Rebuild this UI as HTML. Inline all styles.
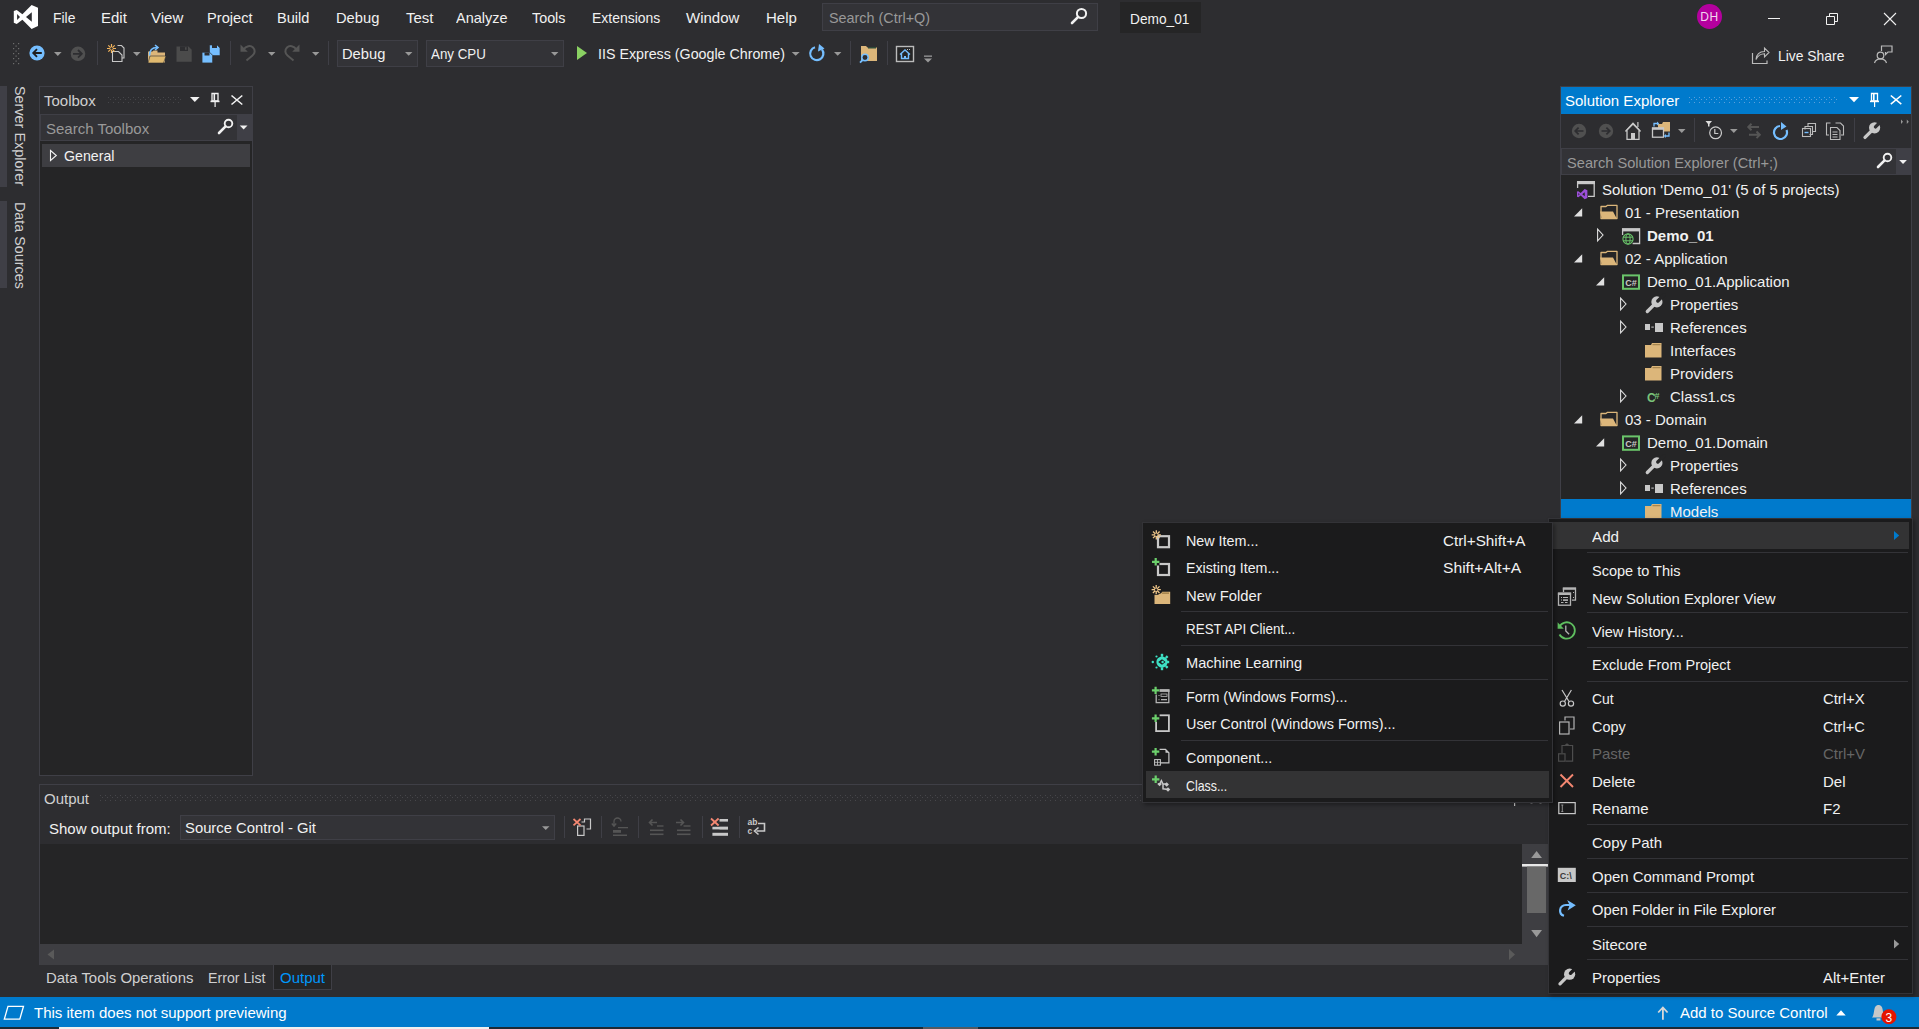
<!DOCTYPE html>
<html><head><meta charset="utf-8">
<style>
*{box-sizing:border-box}
html,body{margin:0;padding:0}
body{width:1919px;height:1029px;overflow:hidden;background:#2d2d30;position:relative;font-family:"Liberation Sans",sans-serif;color:#f1f1f1}
.a{position:absolute}
.t{position:absolute;font-size:15px;line-height:15px;white-space:pre;color:#f1f1f1}
.g{color:#999999}
.box{position:absolute;border:1px solid #3f3f46;background:#333337}
.sep{position:absolute;width:1px;background:#46464a}
svg{position:absolute;overflow:visible}
.msep{position:absolute;height:1px;background:#333337}
</style></head><body>

<!-- ============ MENU BAR ============ -->
<div id="menubar">
<svg style="left:13px;top:5px" width="26" height="25" viewBox="0 0 26 25"></svg>
<div class="t" style="left:53px;top:10px;transform:scaleX(0.927);transform-origin:0 0">File</div>
<div class="t" style="left:101px;top:10px">Edit</div>
<div class="t" style="left:151px;top:10px">View</div>
<div class="t" style="left:207px;top:10px;transform:scaleX(0.975);transform-origin:0 0">Project</div>
<div class="t" style="left:277px;top:10px;transform:scaleX(0.974);transform-origin:0 0">Build</div>
<div class="t" style="left:336px;top:10px;transform:scaleX(0.98);transform-origin:0 0">Debug</div>
<div class="t" style="left:406px;top:10px">Test</div>
<div class="t" style="left:456px;top:10px;transform:scaleX(0.965);transform-origin:0 0">Analyze</div>
<div class="t" style="left:532px;top:10px;transform:scaleX(0.956);transform-origin:0 0">Tools</div>
<div class="t" style="left:592px;top:10px;transform:scaleX(0.931);transform-origin:0 0">Extensions</div>
<div class="t" style="left:686px;top:10px">Window</div>
<div class="t" style="left:766px;top:10px">Help</div>
<div class="box" style="left:822px;top:3px;width:276px;height:28px"></div>
<div class="t g" style="left:829px;top:10px;transform:scaleX(0.958);transform-origin:0 0">Search (Ctrl+Q)</div>
<div class="a" style="left:1120px;top:2px;width:81px;height:31px;background:#252526"></div>
<div class="t" style="left:1130px;top:11px;transform:scaleX(0.914);transform-origin:0 0">Demo_01</div>
<div class="a" style="left:1697px;top:4px;width:25px;height:25px;border-radius:50%;background:#b4009e"></div>

<svg style="left:8px;top:0px" width="40" height="36" viewBox="0 0 40 36"><path fill="#fff" fill-rule="evenodd" d="M5.8,11 L8.7,9.9 L14.4,14.2 L23.6,4.9 L30,7.8 L30,25.9 L23.6,29 L14.4,19.8 L8.7,24 L5.8,22.8 Z M9.1,14 L12,16.9 L9.1,19.9 Z M18,16.9 L23.8,12.2 L23.8,21.8 Z"/></svg>
<svg style="left:1068px;top:6px" width="22" height="20" viewBox="0 0 22 20"><circle cx="13.5" cy="7.5" r="4.6" fill="none" stroke="#f1f1f1" stroke-width="2"/><path d="M10.2,10.8 L4,17" stroke="#f1f1f1" stroke-width="2.6" stroke-linecap="round"/></svg>
<div class="a" style="left:1697px;top:5px;width:25px;height:25px;font-size:12px;line-height:25px;text-align:center;color:#f3d6ef;letter-spacing:.5px">DH</div>
<div class="a" style="left:1768px;top:18px;width:12px;height:1px;background:#f1f1f1"></div>
<svg style="left:1824px;top:11px" width="16" height="16" viewBox="0 0 16 16"><path d="M2.5,5.5 h8 v8 h-8 z M5.5,5.5 v-3 h8 v8 h-3" fill="none" stroke="#f1f1f1" stroke-width="1"/></svg>
<svg style="left:1882px;top:11px" width="16" height="16" viewBox="0 0 16 16"><path d="M2,2 L14,14 M14,2 L2,14" stroke="#f1f1f1" stroke-width="1.1"/></svg>
</div>

<!-- ============ TOOLBAR ============ -->
<div id="toolbar">
<div class="box" style="left:337px;top:40px;width:81px;height:27px"></div>
<div class="t" style="left:342px;top:46px;transform:scaleX(0.98);transform-origin:0 0">Debug</div>
<div class="box" style="left:426px;top:40px;width:138px;height:27px"></div>
<div class="t" style="left:431px;top:46px;transform:scaleX(0.89);transform-origin:0 0">Any CPU</div>
<div class="t" style="left:598px;top:46px;transform:scaleX(0.95);transform-origin:0 0">IIS Express (Google Chrome)</div>
<div class="t" style="left:1778px;top:48px;transform:scaleX(0.926);transform-origin:0 0">Live Share</div>

<svg style="left:0;top:36px" width="1919" height="36" viewBox="0 36 1919 36">
 <g fill="#6d6d6d">
  <rect x="13" y="43" width="1.2" height="1.2"/><rect x="18" y="43" width="1.2" height="1.2"/>
  <rect x="13" y="48" width="1.2" height="1.2"/><rect x="18" y="48" width="1.2" height="1.2"/>
  <rect x="13" y="53" width="1.2" height="1.2"/><rect x="18" y="53" width="1.2" height="1.2"/>
  <rect x="13" y="58" width="1.2" height="1.2"/><rect x="18" y="58" width="1.2" height="1.2"/>
  <rect x="13" y="63" width="1.2" height="1.2"/><rect x="18" y="63" width="1.2" height="1.2"/>
  <rect x="15.5" y="45.5" width="1.2" height="1.2"/><rect x="15.5" y="50.5" width="1.2" height="1.2"/>
  <rect x="15.5" y="55.5" width="1.2" height="1.2"/><rect x="15.5" y="60.5" width="1.2" height="1.2"/>
 </g>
 <circle cx="37" cy="53" r="7.6" fill="#75beff"/>
 <path d="M41.8,53 H33.5 M37,49.2 L33.2,53 L37,56.8" fill="none" stroke="#1e1e1e" stroke-width="1.8"/>
 <circle cx="78" cy="53.8" r="7.3" fill="#505050"/>
 <path d="M73,53.8 H81.5 M78,50 L81.8,53.8 L78,57.6" fill="none" stroke="#2d2d30" stroke-width="1.8"/>
 <g fill="#999"><path d="M54,52 h7.6 l-3.8,4z"/><path d="M133,52 h7.6 l-3.8,4z"/><path d="M268,52 h7.4 l-3.7,3.8z"/><path d="M312,52 h7.4 l-3.7,3.8z"/><path d="M405,52 h7.4 l-3.7,3.8z"/><path d="M551,52 h7.4 l-3.7,3.8z"/><path d="M791.7,52 h8 l-4,3.8z"/><path d="M834,52 h7.4 l-3.7,3.8z"/></g>
 <g fill="#3f3f46"><rect x="97" y="41" width="1" height="24"/><rect x="230" y="41" width="1" height="24"/><rect x="328" y="41" width="1" height="24"/><rect x="850" y="41" width="1" height="24"/><rect x="887" y="41" width="1" height="24"/></g>
 <!-- new project -->
 <path d="M117.5,45.5 h4 l2.5,2.5 v10 h-2" fill="none" stroke="#c8c8c8" stroke-width="1.1"/>
 <path d="M112.5,51.5 h6 l3.5,3.5 v6.5 h-9.5 z" fill="#2d2d30" stroke="#c8c8c8" stroke-width="1.1"/>
 <g stroke="#f2b35b" stroke-width="1.2"><path d="M111.5,44 v9 M107,48.5 h9 M108.3,45.3 l6.4,6.4 M114.7,45.3 l-6.4,6.4"/></g>
 <circle cx="111.5" cy="48.5" r="1.2" fill="#2d2d30"/>
 <!-- open folder -->
 <path d="M148,51.5 h4.5 l1,-1 h4 v2 h7.5 v10 h-17 z" fill="#dcb67a"/>
 <path d="M150,56 h16 l-2.5,7 h-15.5 z" fill="#e0b96f" stroke="#2d2d30" stroke-width=".6"/>
 <path d="M149.5,55.5 C149.5,50 152,47.5 157,47.5" fill="none" stroke="#75beff" stroke-width="1.6"/>
 <path d="M155,45 l3,2.5 l-3,2.5" fill="none" stroke="#75beff" stroke-width="1.6"/>
 <!-- save gray -->
 <path d="M176.5,46.5 h12 l3.2,3.2 v12 h-15.2 z" fill="#4b4b4b"/>
 <path d="M180,46.5 h8 v4.5 h-8 z" fill="#2d2d30"/><rect x="185" y="47.2" width="1.6" height="2.6" fill="#4b4b4b"/>
 <!-- save all -->
 <path d="M209.5,45 h7.5 l3,3 v7.6 h-10.5 z" fill="#75beff" stroke="#2d2d30" stroke-width=".6"/>
 <path d="M212,45 h5 v3 h-5 z" fill="#2d2d30"/>
 <path d="M202,52.2 h7.5 l3.2,3.2 v7.6 h-10.7 z" fill="#75beff" stroke="#2d2d30" stroke-width=".8"/>
 <path d="M204.5,52.5 h5 v3 h-5 z" fill="#2d2d30"/>
 <!-- undo / redo -->
 <path d="M243.5,49.5 C246,46 250.5,45 253,47.5 C255.5,50 255,53.5 252.5,55.5 L246.5,60.5" fill="none" stroke="#555" stroke-width="2"/>
 <path d="M240.5,44.5 v7.3 h7.3 z" fill="#555"/>
 <path d="M296.5,49.5 C294,46 289.5,45 287,47.5 C284.5,50 285,53.5 287.5,55.5 L293.5,60.5" fill="none" stroke="#555" stroke-width="2"/>
 <path d="M299.5,44.5 v7.3 h-7.3 z" fill="#555"/>
 <!-- play -->
 <path d="M577,46 L587,53 L577,60 z" fill="#8ad163"/>
 <!-- refresh -->
 <path d="M822,49.5 A6.6,6.6 0 1 1 815,47.2" fill="none" stroke="#75beff" stroke-width="2.2"/>
 <path d="M819,44 L824.5,48.5 L818,51.5 z" fill="#75beff"/>
 <!-- folder search -->
 <path d="M861,46 h5 l1.5,1.5 h9.5 v13.5 h-16 z" fill="#dcb67a"/>
 <rect x="868" y="47" width="8" height="1.5" fill="#2d4a3a"/>
 <circle cx="865" cy="57.5" r="3.2" fill="#2d2d30" stroke="#75beff" stroke-width="1.5"/>
 <path d="M862.6,60 L860,62.6" stroke="#75beff" stroke-width="1.8"/>
 <!-- browser home -->
 <rect x="896.5" y="46.5" width="17" height="15" fill="#252526" stroke="#bbb" stroke-width="1.4"/>
 <path d="M900,54.5 L905,50 L910,54.5 M901.5,53.5 v5 h7 v-5" fill="none" stroke="#75beff" stroke-width="1.4"/>
 <rect x="904" y="56" width="2" height="2.5" fill="#75beff"/>
 <g fill="#bbb"><rect x="907" y="49" width="1" height="1"/><rect x="909" y="49" width="1" height="1"/></g>
 <!-- overflow -->
 <rect x="924" y="55.5" width="8" height="1.3" fill="#999"/><path d="M924,58.5 h8 l-4,4z" fill="#999"/>
 <!-- live share -->
 <path d="M1752.5,53 v10.5 h14.5 v-3" fill="none" stroke="#bbb" stroke-width="1.2"/>
 <path d="M1756,59.5 C1756.5,54 1760,51.5 1764.5,51.5 v-3.5 l4.5,4.5 l-4.5,4.5 v-3.2 C1761,53.8 1758,55.5 1756,59.5 z" fill="none" stroke="#bbb" stroke-width="1.1"/>
 <!-- feedback -->
 <circle cx="1880.5" cy="55.5" r="3.3" fill="none" stroke="#bbb" stroke-width="1.2"/>
 <path d="M1874.5,63 C1875.5,59.5 1877.5,58.8 1880.5,58.8 C1883.5,58.8 1885.5,59.5 1886.5,63" fill="none" stroke="#bbb" stroke-width="1.2"/>
 <path d="M1881.5,51 v-5 h10.5 v6 h-4 l-2.5,2.5 v-2.5" fill="none" stroke="#bbb" stroke-width="1.2"/>
</svg>
</div>

<!-- ============ LEFT STRIP ============ -->
<div class="a" style="left:0;top:86px;width:7px;height:101px;background:#3f3f46"></div>
<div class="a" style="left:0;top:201px;width:7px;height:87px;background:#3f3f46"></div>
<div class="t" style="left:27.5px;top:86px;color:#d0d0d0;transform:rotate(90deg) scaleX(0.96);transform-origin:0 0">Server Explorer</div>
<div class="t" style="left:27.5px;top:201.5px;color:#d0d0d0;transform:rotate(90deg) scaleX(0.955);transform-origin:0 0">Data Sources</div>

<!-- ============ TOOLBOX ============ -->
<div class="a" style="left:39px;top:86px;width:214px;height:690px;border:1px solid #3f3f46;background:#252526"></div>
<div class="a" style="left:40px;top:87px;width:212px;height:27px;background:#2d2d30"></div>
<div class="t" style="left:44px;top:93px;color:#d0d0d0">Toolbox</div>
<div class="a" style="left:40px;top:114px;width:212px;height:27px;background:#3f3f46"></div>
<div class="a" style="left:41px;top:115px;width:196px;height:25px;background:#333337"></div>
<div class="a" style="left:237px;top:115px;width:15px;height:25px;background:#3f3f46"></div>
<div class="t g" style="left:46px;top:121px">Search Toolbox</div>
<div class="a" style="left:42px;top:144px;width:208px;height:23px;background:#3e3e42"></div>
<div class="t" style="left:64px;top:148px;transform:scaleX(0.946);transform-origin:0 0">General</div>

<!-- ============ OUTPUT ============ -->
<div class="a" style="left:39px;top:784px;width:1512px;height:181px;border:1px solid #3f3f46;border-bottom:none;background:#2d2d30"></div>
<div class="t" style="left:44px;top:791px;color:#d0d0d0">Output</div>
<div class="t" style="left:49px;top:821px">Show output from:</div>
<div class="box" style="left:180px;top:815px;width:375px;height:25px"></div>
<div class="t" style="left:185px;top:820px;transform:scaleX(0.988);transform-origin:0 0">Source Control - Git</div>
<div class="a" style="left:40px;top:844px;width:1482px;height:100px;background:#252526"></div>
<div class="a" style="left:1522px;top:844px;width:27px;height:121px;background:#3e3e42"></div>
<div class="a" style="left:40px;top:944px;width:1482px;height:21px;background:#3e3e42"></div>
<div class="t" style="left:46px;top:970px;color:#d0d0d0;transform:scaleX(0.995);transform-origin:0 0">Data Tools Operations</div>
<div class="t" style="left:208px;top:970px;color:#d0d0d0;transform:scaleX(0.944);transform-origin:0 0">Error List</div>
<div class="a" style="left:273px;top:965px;width:59px;height:25px;border:1px solid #3f3f46;border-top:none;background:#252526"></div>
<div class="t" style="left:280px;top:970px;color:#0097fb">Output</div>
<svg style="left:0;top:0" width="1919" height="1029" viewBox="0 0 1919 1029">
 <g fill="#46464a"><rect x="100" y="795" width="1" height="1"/><rect x="100" y="800" width="1" height="1"/><rect x="102" y="797" width="1" height="1"/><rect x="105" y="795" width="1" height="1"/><rect x="105" y="800" width="1" height="1"/><rect x="107" y="797" width="1" height="1"/><rect x="110" y="795" width="1" height="1"/><rect x="110" y="800" width="1" height="1"/><rect x="112" y="797" width="1" height="1"/><rect x="115" y="795" width="1" height="1"/><rect x="115" y="800" width="1" height="1"/><rect x="117" y="797" width="1" height="1"/><rect x="120" y="795" width="1" height="1"/><rect x="120" y="800" width="1" height="1"/><rect x="122" y="797" width="1" height="1"/><rect x="125" y="795" width="1" height="1"/><rect x="125" y="800" width="1" height="1"/><rect x="127" y="797" width="1" height="1"/><rect x="130" y="795" width="1" height="1"/><rect x="130" y="800" width="1" height="1"/><rect x="132" y="797" width="1" height="1"/><rect x="135" y="795" width="1" height="1"/><rect x="135" y="800" width="1" height="1"/><rect x="137" y="797" width="1" height="1"/><rect x="140" y="795" width="1" height="1"/><rect x="140" y="800" width="1" height="1"/><rect x="142" y="797" width="1" height="1"/><rect x="145" y="795" width="1" height="1"/><rect x="145" y="800" width="1" height="1"/><rect x="147" y="797" width="1" height="1"/><rect x="150" y="795" width="1" height="1"/><rect x="150" y="800" width="1" height="1"/><rect x="152" y="797" width="1" height="1"/><rect x="155" y="795" width="1" height="1"/><rect x="155" y="800" width="1" height="1"/><rect x="157" y="797" width="1" height="1"/><rect x="160" y="795" width="1" height="1"/><rect x="160" y="800" width="1" height="1"/><rect x="162" y="797" width="1" height="1"/><rect x="165" y="795" width="1" height="1"/><rect x="165" y="800" width="1" height="1"/><rect x="167" y="797" width="1" height="1"/><rect x="170" y="795" width="1" height="1"/><rect x="170" y="800" width="1" height="1"/><rect x="172" y="797" width="1" height="1"/><rect x="175" y="795" width="1" height="1"/><rect x="175" y="800" width="1" height="1"/><rect x="177" y="797" width="1" height="1"/><rect x="180" y="795" width="1" height="1"/><rect x="180" y="800" width="1" height="1"/><rect x="182" y="797" width="1" height="1"/><rect x="185" y="795" width="1" height="1"/><rect x="185" y="800" width="1" height="1"/><rect x="187" y="797" width="1" height="1"/><rect x="190" y="795" width="1" height="1"/><rect x="190" y="800" width="1" height="1"/><rect x="192" y="797" width="1" height="1"/><rect x="195" y="795" width="1" height="1"/><rect x="195" y="800" width="1" height="1"/><rect x="197" y="797" width="1" height="1"/><rect x="200" y="795" width="1" height="1"/><rect x="200" y="800" width="1" height="1"/><rect x="202" y="797" width="1" height="1"/><rect x="205" y="795" width="1" height="1"/><rect x="205" y="800" width="1" height="1"/><rect x="207" y="797" width="1" height="1"/><rect x="210" y="795" width="1" height="1"/><rect x="210" y="800" width="1" height="1"/><rect x="212" y="797" width="1" height="1"/><rect x="215" y="795" width="1" height="1"/><rect x="215" y="800" width="1" height="1"/><rect x="217" y="797" width="1" height="1"/><rect x="220" y="795" width="1" height="1"/><rect x="220" y="800" width="1" height="1"/><rect x="222" y="797" width="1" height="1"/><rect x="225" y="795" width="1" height="1"/><rect x="225" y="800" width="1" height="1"/><rect x="227" y="797" width="1" height="1"/><rect x="230" y="795" width="1" height="1"/><rect x="230" y="800" width="1" height="1"/><rect x="232" y="797" width="1" height="1"/><rect x="235" y="795" width="1" height="1"/><rect x="235" y="800" width="1" height="1"/><rect x="237" y="797" width="1" height="1"/><rect x="240" y="795" width="1" height="1"/><rect x="240" y="800" width="1" height="1"/><rect x="242" y="797" width="1" height="1"/><rect x="245" y="795" width="1" height="1"/><rect x="245" y="800" width="1" height="1"/><rect x="247" y="797" width="1" height="1"/><rect x="250" y="795" width="1" height="1"/><rect x="250" y="800" width="1" height="1"/><rect x="252" y="797" width="1" height="1"/><rect x="255" y="795" width="1" height="1"/><rect x="255" y="800" width="1" height="1"/><rect x="257" y="797" width="1" height="1"/><rect x="260" y="795" width="1" height="1"/><rect x="260" y="800" width="1" height="1"/><rect x="262" y="797" width="1" height="1"/><rect x="265" y="795" width="1" height="1"/><rect x="265" y="800" width="1" height="1"/><rect x="267" y="797" width="1" height="1"/><rect x="270" y="795" width="1" height="1"/><rect x="270" y="800" width="1" height="1"/><rect x="272" y="797" width="1" height="1"/><rect x="275" y="795" width="1" height="1"/><rect x="275" y="800" width="1" height="1"/><rect x="277" y="797" width="1" height="1"/><rect x="280" y="795" width="1" height="1"/><rect x="280" y="800" width="1" height="1"/><rect x="282" y="797" width="1" height="1"/><rect x="285" y="795" width="1" height="1"/><rect x="285" y="800" width="1" height="1"/><rect x="287" y="797" width="1" height="1"/><rect x="290" y="795" width="1" height="1"/><rect x="290" y="800" width="1" height="1"/><rect x="292" y="797" width="1" height="1"/><rect x="295" y="795" width="1" height="1"/><rect x="295" y="800" width="1" height="1"/><rect x="297" y="797" width="1" height="1"/><rect x="300" y="795" width="1" height="1"/><rect x="300" y="800" width="1" height="1"/><rect x="302" y="797" width="1" height="1"/><rect x="305" y="795" width="1" height="1"/><rect x="305" y="800" width="1" height="1"/><rect x="307" y="797" width="1" height="1"/><rect x="310" y="795" width="1" height="1"/><rect x="310" y="800" width="1" height="1"/><rect x="312" y="797" width="1" height="1"/><rect x="315" y="795" width="1" height="1"/><rect x="315" y="800" width="1" height="1"/><rect x="317" y="797" width="1" height="1"/><rect x="320" y="795" width="1" height="1"/><rect x="320" y="800" width="1" height="1"/><rect x="322" y="797" width="1" height="1"/><rect x="325" y="795" width="1" height="1"/><rect x="325" y="800" width="1" height="1"/><rect x="327" y="797" width="1" height="1"/><rect x="330" y="795" width="1" height="1"/><rect x="330" y="800" width="1" height="1"/><rect x="332" y="797" width="1" height="1"/><rect x="335" y="795" width="1" height="1"/><rect x="335" y="800" width="1" height="1"/><rect x="337" y="797" width="1" height="1"/><rect x="340" y="795" width="1" height="1"/><rect x="340" y="800" width="1" height="1"/><rect x="342" y="797" width="1" height="1"/><rect x="345" y="795" width="1" height="1"/><rect x="345" y="800" width="1" height="1"/><rect x="347" y="797" width="1" height="1"/><rect x="350" y="795" width="1" height="1"/><rect x="350" y="800" width="1" height="1"/><rect x="352" y="797" width="1" height="1"/><rect x="355" y="795" width="1" height="1"/><rect x="355" y="800" width="1" height="1"/><rect x="357" y="797" width="1" height="1"/><rect x="360" y="795" width="1" height="1"/><rect x="360" y="800" width="1" height="1"/><rect x="362" y="797" width="1" height="1"/><rect x="365" y="795" width="1" height="1"/><rect x="365" y="800" width="1" height="1"/><rect x="367" y="797" width="1" height="1"/><rect x="370" y="795" width="1" height="1"/><rect x="370" y="800" width="1" height="1"/><rect x="372" y="797" width="1" height="1"/><rect x="375" y="795" width="1" height="1"/><rect x="375" y="800" width="1" height="1"/><rect x="377" y="797" width="1" height="1"/><rect x="380" y="795" width="1" height="1"/><rect x="380" y="800" width="1" height="1"/><rect x="382" y="797" width="1" height="1"/><rect x="385" y="795" width="1" height="1"/><rect x="385" y="800" width="1" height="1"/><rect x="387" y="797" width="1" height="1"/><rect x="390" y="795" width="1" height="1"/><rect x="390" y="800" width="1" height="1"/><rect x="392" y="797" width="1" height="1"/><rect x="395" y="795" width="1" height="1"/><rect x="395" y="800" width="1" height="1"/><rect x="397" y="797" width="1" height="1"/><rect x="400" y="795" width="1" height="1"/><rect x="400" y="800" width="1" height="1"/><rect x="402" y="797" width="1" height="1"/><rect x="405" y="795" width="1" height="1"/><rect x="405" y="800" width="1" height="1"/><rect x="407" y="797" width="1" height="1"/><rect x="410" y="795" width="1" height="1"/><rect x="410" y="800" width="1" height="1"/><rect x="412" y="797" width="1" height="1"/><rect x="415" y="795" width="1" height="1"/><rect x="415" y="800" width="1" height="1"/><rect x="417" y="797" width="1" height="1"/><rect x="420" y="795" width="1" height="1"/><rect x="420" y="800" width="1" height="1"/><rect x="422" y="797" width="1" height="1"/><rect x="425" y="795" width="1" height="1"/><rect x="425" y="800" width="1" height="1"/><rect x="427" y="797" width="1" height="1"/><rect x="430" y="795" width="1" height="1"/><rect x="430" y="800" width="1" height="1"/><rect x="432" y="797" width="1" height="1"/><rect x="435" y="795" width="1" height="1"/><rect x="435" y="800" width="1" height="1"/><rect x="437" y="797" width="1" height="1"/><rect x="440" y="795" width="1" height="1"/><rect x="440" y="800" width="1" height="1"/><rect x="442" y="797" width="1" height="1"/><rect x="445" y="795" width="1" height="1"/><rect x="445" y="800" width="1" height="1"/><rect x="447" y="797" width="1" height="1"/><rect x="450" y="795" width="1" height="1"/><rect x="450" y="800" width="1" height="1"/><rect x="452" y="797" width="1" height="1"/><rect x="455" y="795" width="1" height="1"/><rect x="455" y="800" width="1" height="1"/><rect x="457" y="797" width="1" height="1"/><rect x="460" y="795" width="1" height="1"/><rect x="460" y="800" width="1" height="1"/><rect x="462" y="797" width="1" height="1"/><rect x="465" y="795" width="1" height="1"/><rect x="465" y="800" width="1" height="1"/><rect x="467" y="797" width="1" height="1"/><rect x="470" y="795" width="1" height="1"/><rect x="470" y="800" width="1" height="1"/><rect x="472" y="797" width="1" height="1"/><rect x="475" y="795" width="1" height="1"/><rect x="475" y="800" width="1" height="1"/><rect x="477" y="797" width="1" height="1"/><rect x="480" y="795" width="1" height="1"/><rect x="480" y="800" width="1" height="1"/><rect x="482" y="797" width="1" height="1"/><rect x="485" y="795" width="1" height="1"/><rect x="485" y="800" width="1" height="1"/><rect x="487" y="797" width="1" height="1"/><rect x="490" y="795" width="1" height="1"/><rect x="490" y="800" width="1" height="1"/><rect x="492" y="797" width="1" height="1"/><rect x="495" y="795" width="1" height="1"/><rect x="495" y="800" width="1" height="1"/><rect x="497" y="797" width="1" height="1"/><rect x="500" y="795" width="1" height="1"/><rect x="500" y="800" width="1" height="1"/><rect x="502" y="797" width="1" height="1"/><rect x="505" y="795" width="1" height="1"/><rect x="505" y="800" width="1" height="1"/><rect x="507" y="797" width="1" height="1"/><rect x="510" y="795" width="1" height="1"/><rect x="510" y="800" width="1" height="1"/><rect x="512" y="797" width="1" height="1"/><rect x="515" y="795" width="1" height="1"/><rect x="515" y="800" width="1" height="1"/><rect x="517" y="797" width="1" height="1"/><rect x="520" y="795" width="1" height="1"/><rect x="520" y="800" width="1" height="1"/><rect x="522" y="797" width="1" height="1"/><rect x="525" y="795" width="1" height="1"/><rect x="525" y="800" width="1" height="1"/><rect x="527" y="797" width="1" height="1"/><rect x="530" y="795" width="1" height="1"/><rect x="530" y="800" width="1" height="1"/><rect x="532" y="797" width="1" height="1"/><rect x="535" y="795" width="1" height="1"/><rect x="535" y="800" width="1" height="1"/><rect x="537" y="797" width="1" height="1"/><rect x="540" y="795" width="1" height="1"/><rect x="540" y="800" width="1" height="1"/><rect x="542" y="797" width="1" height="1"/><rect x="545" y="795" width="1" height="1"/><rect x="545" y="800" width="1" height="1"/><rect x="547" y="797" width="1" height="1"/><rect x="550" y="795" width="1" height="1"/><rect x="550" y="800" width="1" height="1"/><rect x="552" y="797" width="1" height="1"/><rect x="555" y="795" width="1" height="1"/><rect x="555" y="800" width="1" height="1"/><rect x="557" y="797" width="1" height="1"/><rect x="560" y="795" width="1" height="1"/><rect x="560" y="800" width="1" height="1"/><rect x="562" y="797" width="1" height="1"/><rect x="565" y="795" width="1" height="1"/><rect x="565" y="800" width="1" height="1"/><rect x="567" y="797" width="1" height="1"/><rect x="570" y="795" width="1" height="1"/><rect x="570" y="800" width="1" height="1"/><rect x="572" y="797" width="1" height="1"/><rect x="575" y="795" width="1" height="1"/><rect x="575" y="800" width="1" height="1"/><rect x="577" y="797" width="1" height="1"/><rect x="580" y="795" width="1" height="1"/><rect x="580" y="800" width="1" height="1"/><rect x="582" y="797" width="1" height="1"/><rect x="585" y="795" width="1" height="1"/><rect x="585" y="800" width="1" height="1"/><rect x="587" y="797" width="1" height="1"/><rect x="590" y="795" width="1" height="1"/><rect x="590" y="800" width="1" height="1"/><rect x="592" y="797" width="1" height="1"/><rect x="595" y="795" width="1" height="1"/><rect x="595" y="800" width="1" height="1"/><rect x="597" y="797" width="1" height="1"/><rect x="600" y="795" width="1" height="1"/><rect x="600" y="800" width="1" height="1"/><rect x="602" y="797" width="1" height="1"/><rect x="605" y="795" width="1" height="1"/><rect x="605" y="800" width="1" height="1"/><rect x="607" y="797" width="1" height="1"/><rect x="610" y="795" width="1" height="1"/><rect x="610" y="800" width="1" height="1"/><rect x="612" y="797" width="1" height="1"/><rect x="615" y="795" width="1" height="1"/><rect x="615" y="800" width="1" height="1"/><rect x="617" y="797" width="1" height="1"/><rect x="620" y="795" width="1" height="1"/><rect x="620" y="800" width="1" height="1"/><rect x="622" y="797" width="1" height="1"/><rect x="625" y="795" width="1" height="1"/><rect x="625" y="800" width="1" height="1"/><rect x="627" y="797" width="1" height="1"/><rect x="630" y="795" width="1" height="1"/><rect x="630" y="800" width="1" height="1"/><rect x="632" y="797" width="1" height="1"/><rect x="635" y="795" width="1" height="1"/><rect x="635" y="800" width="1" height="1"/><rect x="637" y="797" width="1" height="1"/><rect x="640" y="795" width="1" height="1"/><rect x="640" y="800" width="1" height="1"/><rect x="642" y="797" width="1" height="1"/><rect x="645" y="795" width="1" height="1"/><rect x="645" y="800" width="1" height="1"/><rect x="647" y="797" width="1" height="1"/><rect x="650" y="795" width="1" height="1"/><rect x="650" y="800" width="1" height="1"/><rect x="652" y="797" width="1" height="1"/><rect x="655" y="795" width="1" height="1"/><rect x="655" y="800" width="1" height="1"/><rect x="657" y="797" width="1" height="1"/><rect x="660" y="795" width="1" height="1"/><rect x="660" y="800" width="1" height="1"/><rect x="662" y="797" width="1" height="1"/><rect x="665" y="795" width="1" height="1"/><rect x="665" y="800" width="1" height="1"/><rect x="667" y="797" width="1" height="1"/><rect x="670" y="795" width="1" height="1"/><rect x="670" y="800" width="1" height="1"/><rect x="672" y="797" width="1" height="1"/><rect x="675" y="795" width="1" height="1"/><rect x="675" y="800" width="1" height="1"/><rect x="677" y="797" width="1" height="1"/><rect x="680" y="795" width="1" height="1"/><rect x="680" y="800" width="1" height="1"/><rect x="682" y="797" width="1" height="1"/><rect x="685" y="795" width="1" height="1"/><rect x="685" y="800" width="1" height="1"/><rect x="687" y="797" width="1" height="1"/><rect x="690" y="795" width="1" height="1"/><rect x="690" y="800" width="1" height="1"/><rect x="692" y="797" width="1" height="1"/><rect x="695" y="795" width="1" height="1"/><rect x="695" y="800" width="1" height="1"/><rect x="697" y="797" width="1" height="1"/><rect x="700" y="795" width="1" height="1"/><rect x="700" y="800" width="1" height="1"/><rect x="702" y="797" width="1" height="1"/><rect x="705" y="795" width="1" height="1"/><rect x="705" y="800" width="1" height="1"/><rect x="707" y="797" width="1" height="1"/><rect x="710" y="795" width="1" height="1"/><rect x="710" y="800" width="1" height="1"/><rect x="712" y="797" width="1" height="1"/><rect x="715" y="795" width="1" height="1"/><rect x="715" y="800" width="1" height="1"/><rect x="717" y="797" width="1" height="1"/><rect x="720" y="795" width="1" height="1"/><rect x="720" y="800" width="1" height="1"/><rect x="722" y="797" width="1" height="1"/><rect x="725" y="795" width="1" height="1"/><rect x="725" y="800" width="1" height="1"/><rect x="727" y="797" width="1" height="1"/><rect x="730" y="795" width="1" height="1"/><rect x="730" y="800" width="1" height="1"/><rect x="732" y="797" width="1" height="1"/><rect x="735" y="795" width="1" height="1"/><rect x="735" y="800" width="1" height="1"/><rect x="737" y="797" width="1" height="1"/><rect x="740" y="795" width="1" height="1"/><rect x="740" y="800" width="1" height="1"/><rect x="742" y="797" width="1" height="1"/><rect x="745" y="795" width="1" height="1"/><rect x="745" y="800" width="1" height="1"/><rect x="747" y="797" width="1" height="1"/><rect x="750" y="795" width="1" height="1"/><rect x="750" y="800" width="1" height="1"/><rect x="752" y="797" width="1" height="1"/><rect x="755" y="795" width="1" height="1"/><rect x="755" y="800" width="1" height="1"/><rect x="757" y="797" width="1" height="1"/><rect x="760" y="795" width="1" height="1"/><rect x="760" y="800" width="1" height="1"/><rect x="762" y="797" width="1" height="1"/><rect x="765" y="795" width="1" height="1"/><rect x="765" y="800" width="1" height="1"/><rect x="767" y="797" width="1" height="1"/><rect x="770" y="795" width="1" height="1"/><rect x="770" y="800" width="1" height="1"/><rect x="772" y="797" width="1" height="1"/><rect x="775" y="795" width="1" height="1"/><rect x="775" y="800" width="1" height="1"/><rect x="777" y="797" width="1" height="1"/><rect x="780" y="795" width="1" height="1"/><rect x="780" y="800" width="1" height="1"/><rect x="782" y="797" width="1" height="1"/><rect x="785" y="795" width="1" height="1"/><rect x="785" y="800" width="1" height="1"/><rect x="787" y="797" width="1" height="1"/><rect x="790" y="795" width="1" height="1"/><rect x="790" y="800" width="1" height="1"/><rect x="792" y="797" width="1" height="1"/><rect x="795" y="795" width="1" height="1"/><rect x="795" y="800" width="1" height="1"/><rect x="797" y="797" width="1" height="1"/><rect x="800" y="795" width="1" height="1"/><rect x="800" y="800" width="1" height="1"/><rect x="802" y="797" width="1" height="1"/><rect x="805" y="795" width="1" height="1"/><rect x="805" y="800" width="1" height="1"/><rect x="807" y="797" width="1" height="1"/><rect x="810" y="795" width="1" height="1"/><rect x="810" y="800" width="1" height="1"/><rect x="812" y="797" width="1" height="1"/><rect x="815" y="795" width="1" height="1"/><rect x="815" y="800" width="1" height="1"/><rect x="817" y="797" width="1" height="1"/><rect x="820" y="795" width="1" height="1"/><rect x="820" y="800" width="1" height="1"/><rect x="822" y="797" width="1" height="1"/><rect x="825" y="795" width="1" height="1"/><rect x="825" y="800" width="1" height="1"/><rect x="827" y="797" width="1" height="1"/><rect x="830" y="795" width="1" height="1"/><rect x="830" y="800" width="1" height="1"/><rect x="832" y="797" width="1" height="1"/><rect x="835" y="795" width="1" height="1"/><rect x="835" y="800" width="1" height="1"/><rect x="837" y="797" width="1" height="1"/><rect x="840" y="795" width="1" height="1"/><rect x="840" y="800" width="1" height="1"/><rect x="842" y="797" width="1" height="1"/><rect x="845" y="795" width="1" height="1"/><rect x="845" y="800" width="1" height="1"/><rect x="847" y="797" width="1" height="1"/><rect x="850" y="795" width="1" height="1"/><rect x="850" y="800" width="1" height="1"/><rect x="852" y="797" width="1" height="1"/><rect x="855" y="795" width="1" height="1"/><rect x="855" y="800" width="1" height="1"/><rect x="857" y="797" width="1" height="1"/><rect x="860" y="795" width="1" height="1"/><rect x="860" y="800" width="1" height="1"/><rect x="862" y="797" width="1" height="1"/><rect x="865" y="795" width="1" height="1"/><rect x="865" y="800" width="1" height="1"/><rect x="867" y="797" width="1" height="1"/><rect x="870" y="795" width="1" height="1"/><rect x="870" y="800" width="1" height="1"/><rect x="872" y="797" width="1" height="1"/><rect x="875" y="795" width="1" height="1"/><rect x="875" y="800" width="1" height="1"/><rect x="877" y="797" width="1" height="1"/><rect x="880" y="795" width="1" height="1"/><rect x="880" y="800" width="1" height="1"/><rect x="882" y="797" width="1" height="1"/><rect x="885" y="795" width="1" height="1"/><rect x="885" y="800" width="1" height="1"/><rect x="887" y="797" width="1" height="1"/><rect x="890" y="795" width="1" height="1"/><rect x="890" y="800" width="1" height="1"/><rect x="892" y="797" width="1" height="1"/><rect x="895" y="795" width="1" height="1"/><rect x="895" y="800" width="1" height="1"/><rect x="897" y="797" width="1" height="1"/><rect x="900" y="795" width="1" height="1"/><rect x="900" y="800" width="1" height="1"/><rect x="902" y="797" width="1" height="1"/><rect x="905" y="795" width="1" height="1"/><rect x="905" y="800" width="1" height="1"/><rect x="907" y="797" width="1" height="1"/><rect x="910" y="795" width="1" height="1"/><rect x="910" y="800" width="1" height="1"/><rect x="912" y="797" width="1" height="1"/><rect x="915" y="795" width="1" height="1"/><rect x="915" y="800" width="1" height="1"/><rect x="917" y="797" width="1" height="1"/><rect x="920" y="795" width="1" height="1"/><rect x="920" y="800" width="1" height="1"/><rect x="922" y="797" width="1" height="1"/><rect x="925" y="795" width="1" height="1"/><rect x="925" y="800" width="1" height="1"/><rect x="927" y="797" width="1" height="1"/><rect x="930" y="795" width="1" height="1"/><rect x="930" y="800" width="1" height="1"/><rect x="932" y="797" width="1" height="1"/><rect x="935" y="795" width="1" height="1"/><rect x="935" y="800" width="1" height="1"/><rect x="937" y="797" width="1" height="1"/><rect x="940" y="795" width="1" height="1"/><rect x="940" y="800" width="1" height="1"/><rect x="942" y="797" width="1" height="1"/><rect x="945" y="795" width="1" height="1"/><rect x="945" y="800" width="1" height="1"/><rect x="947" y="797" width="1" height="1"/><rect x="950" y="795" width="1" height="1"/><rect x="950" y="800" width="1" height="1"/><rect x="952" y="797" width="1" height="1"/><rect x="955" y="795" width="1" height="1"/><rect x="955" y="800" width="1" height="1"/><rect x="957" y="797" width="1" height="1"/><rect x="960" y="795" width="1" height="1"/><rect x="960" y="800" width="1" height="1"/><rect x="962" y="797" width="1" height="1"/><rect x="965" y="795" width="1" height="1"/><rect x="965" y="800" width="1" height="1"/><rect x="967" y="797" width="1" height="1"/><rect x="970" y="795" width="1" height="1"/><rect x="970" y="800" width="1" height="1"/><rect x="972" y="797" width="1" height="1"/><rect x="975" y="795" width="1" height="1"/><rect x="975" y="800" width="1" height="1"/><rect x="977" y="797" width="1" height="1"/><rect x="980" y="795" width="1" height="1"/><rect x="980" y="800" width="1" height="1"/><rect x="982" y="797" width="1" height="1"/><rect x="985" y="795" width="1" height="1"/><rect x="985" y="800" width="1" height="1"/><rect x="987" y="797" width="1" height="1"/><rect x="990" y="795" width="1" height="1"/><rect x="990" y="800" width="1" height="1"/><rect x="992" y="797" width="1" height="1"/><rect x="995" y="795" width="1" height="1"/><rect x="995" y="800" width="1" height="1"/><rect x="997" y="797" width="1" height="1"/><rect x="1000" y="795" width="1" height="1"/><rect x="1000" y="800" width="1" height="1"/><rect x="1002" y="797" width="1" height="1"/><rect x="1005" y="795" width="1" height="1"/><rect x="1005" y="800" width="1" height="1"/><rect x="1007" y="797" width="1" height="1"/><rect x="1010" y="795" width="1" height="1"/><rect x="1010" y="800" width="1" height="1"/><rect x="1012" y="797" width="1" height="1"/><rect x="1015" y="795" width="1" height="1"/><rect x="1015" y="800" width="1" height="1"/><rect x="1017" y="797" width="1" height="1"/><rect x="1020" y="795" width="1" height="1"/><rect x="1020" y="800" width="1" height="1"/><rect x="1022" y="797" width="1" height="1"/><rect x="1025" y="795" width="1" height="1"/><rect x="1025" y="800" width="1" height="1"/><rect x="1027" y="797" width="1" height="1"/><rect x="1030" y="795" width="1" height="1"/><rect x="1030" y="800" width="1" height="1"/><rect x="1032" y="797" width="1" height="1"/><rect x="1035" y="795" width="1" height="1"/><rect x="1035" y="800" width="1" height="1"/><rect x="1037" y="797" width="1" height="1"/><rect x="1040" y="795" width="1" height="1"/><rect x="1040" y="800" width="1" height="1"/><rect x="1042" y="797" width="1" height="1"/><rect x="1045" y="795" width="1" height="1"/><rect x="1045" y="800" width="1" height="1"/><rect x="1047" y="797" width="1" height="1"/><rect x="1050" y="795" width="1" height="1"/><rect x="1050" y="800" width="1" height="1"/><rect x="1052" y="797" width="1" height="1"/><rect x="1055" y="795" width="1" height="1"/><rect x="1055" y="800" width="1" height="1"/><rect x="1057" y="797" width="1" height="1"/><rect x="1060" y="795" width="1" height="1"/><rect x="1060" y="800" width="1" height="1"/><rect x="1062" y="797" width="1" height="1"/><rect x="1065" y="795" width="1" height="1"/><rect x="1065" y="800" width="1" height="1"/><rect x="1067" y="797" width="1" height="1"/><rect x="1070" y="795" width="1" height="1"/><rect x="1070" y="800" width="1" height="1"/><rect x="1072" y="797" width="1" height="1"/><rect x="1075" y="795" width="1" height="1"/><rect x="1075" y="800" width="1" height="1"/><rect x="1077" y="797" width="1" height="1"/><rect x="1080" y="795" width="1" height="1"/><rect x="1080" y="800" width="1" height="1"/><rect x="1082" y="797" width="1" height="1"/><rect x="1085" y="795" width="1" height="1"/><rect x="1085" y="800" width="1" height="1"/><rect x="1087" y="797" width="1" height="1"/><rect x="1090" y="795" width="1" height="1"/><rect x="1090" y="800" width="1" height="1"/><rect x="1092" y="797" width="1" height="1"/><rect x="1095" y="795" width="1" height="1"/><rect x="1095" y="800" width="1" height="1"/><rect x="1097" y="797" width="1" height="1"/><rect x="1100" y="795" width="1" height="1"/><rect x="1100" y="800" width="1" height="1"/><rect x="1102" y="797" width="1" height="1"/><rect x="1105" y="795" width="1" height="1"/><rect x="1105" y="800" width="1" height="1"/><rect x="1107" y="797" width="1" height="1"/><rect x="1110" y="795" width="1" height="1"/><rect x="1110" y="800" width="1" height="1"/><rect x="1112" y="797" width="1" height="1"/><rect x="1115" y="795" width="1" height="1"/><rect x="1115" y="800" width="1" height="1"/><rect x="1117" y="797" width="1" height="1"/><rect x="1120" y="795" width="1" height="1"/><rect x="1120" y="800" width="1" height="1"/><rect x="1122" y="797" width="1" height="1"/><rect x="1125" y="795" width="1" height="1"/><rect x="1125" y="800" width="1" height="1"/><rect x="1127" y="797" width="1" height="1"/><rect x="1130" y="795" width="1" height="1"/><rect x="1130" y="800" width="1" height="1"/><rect x="1132" y="797" width="1" height="1"/><rect x="1135" y="795" width="1" height="1"/><rect x="1135" y="800" width="1" height="1"/><rect x="1137" y="797" width="1" height="1"/><rect x="1140" y="795" width="1" height="1"/><rect x="1140" y="800" width="1" height="1"/><rect x="1142" y="797" width="1" height="1"/></g>
 <!-- combo arrow -->
 <path d="M542,826.2 h7.5 l-3.75,3.8z" fill="#999"/>
 <g fill="#3f3f46"><rect x="564" y="816" width="1" height="22"/><rect x="601" y="816" width="1" height="22"/><rect x="638" y="816" width="1" height="22"/><rect x="702" y="816" width="1" height="22"/><rect x="739" y="816" width="1" height="22"/></g>
 <!-- find in code -->
 <g fill="none" stroke="#c8c8c8" stroke-width="1.2"><path d="M581.5,822 h3 v-3 h6 v10 h-4"/><rect x="577.6" y="826" width="6.4" height="9.4"/></g>
 <path d="M573.5,819 L580.5,825.3 M580.5,819 L573.5,825.3" stroke="#f48771" stroke-width="1.7"/>
 <!-- prev msg disabled -->
 <g fill="#555"><rect x="613" y="830" width="8" height="2.8"/><rect x="613" y="834.5" width="14" height="1.5"/><rect x="618" y="827" width="10" height="1.3"/></g>
 <path d="M614,826 v-4.5 a3.5,3.5 0 0 1 7,0 M611.8,823.5 l2.2,2.8 l2.2,-2.8" fill="none" stroke="#555" stroke-width="1.3"/>
 <!-- go prev / next -->
 <g fill="#555"><rect x="650" y="829.5" width="13.5" height="1.6"/><rect x="650" y="833.5" width="13.5" height="1.6"/><rect x="657" y="825.3" width="6.5" height="1.4"/>
  <rect x="677" y="829.5" width="13.5" height="1.6"/><rect x="677" y="833.5" width="13.5" height="1.6"/><rect x="683.5" y="825.3" width="7" height="1.4"/></g>
 <path d="M657,822.5 h-7.5 M652.5,819.5 l-3,3 l3,3 M676,822.5 h7.5 M680.5,819.5 l3,3 l-3,3" fill="none" stroke="#555" stroke-width="1.6"/>
 <!-- clear all -->
 <g fill="#c8c8c8"><rect x="719.5" y="819" width="8.5" height="2.6"/><rect x="719.5" y="826.8" width="8.5" height="2.6"/><rect x="712.4" y="826.8" width="15.6" height="2.6" /><rect x="712.4" y="832.8" width="15.6" height="3"/></g>
 <rect x="710" y="817.5" width="9" height="8.5" fill="#2d2d30"/>
 <path d="M711,818.5 L718.6,825.5 M718.6,818.5 L711,825.5" stroke="#f48771" stroke-width="1.8"/>
 <!-- word wrap -->
 <text x="747.5" y="825" font-size="8.5" font-family="Liberation Sans" font-weight="bold" fill="#c8c8c8">ab</text>
 <text x="747.5" y="833.5" font-size="8.5" font-family="Liberation Sans" font-weight="bold" fill="#c8c8c8">c</text>
 <path d="M758,823.5 h6.5 v7.5 h-8" fill="none" stroke="#c8c8c8" stroke-width="1.6"/>
 <path d="M758.5,827.5 l-4,3.5 l4,3.5" fill="none" stroke="#c8c8c8" stroke-width="1.6"/>
 <!-- scrollbar -->
 <path d="M1531.2,858 L1536.6,851 L1542,858 z" fill="#999"/>
 <rect x="1522" y="864" width="26" height="2.6" fill="#e8e8e8"/>
 <rect x="1527" y="866.6" width="19" height="46.4" fill="#686868"/>
 <path d="M1531.2,930 L1536.6,937.2 L1542,930 z" fill="#999"/>
 <path d="M54,949.5 L47.5,954.5 L54,959.5 z" fill="#5a5a5a"/>
 <path d="M1509,949 L1515,954.5 L1509,960 z" fill="#5a5a5a"/>
 <!-- title buttons peeking below submenu -->
 <rect x="1514" y="803" width="1.2" height="3" fill="#d0d0d0"/><rect x="1530.5" y="802.5" width="2" height="1" fill="#a8a8a8"/><rect x="1539.5" y="802.5" width="2" height="1" fill="#a8a8a8"/>
</svg>
<!-- ============ SOLUTION EXPLORER ============ -->
<div class="a" style="left:1560px;top:86px;width:352px;height:433px;border:1px solid #3f3f46;background:#252526"></div>
<div class="a" style="left:1561px;top:87px;width:350px;height:27px;background:#007acc"></div>
<div class="t" style="left:1565px;top:93px;color:#fff">Solution Explorer</div>
<div class="a" style="left:1561px;top:114px;width:350px;height:34px;background:#2d2d30"></div>
<div class="a" style="left:1561px;top:148px;width:350px;height:27px;background:#3f3f46"></div>
<div class="a" style="left:1562px;top:149px;width:334px;height:25px;background:#333337"></div>
<div class="t g" style="left:1567px;top:155px;transform:scaleX(0.975);transform-origin:0 0">Search Solution Explorer (Ctrl+;)</div>
<!-- TREE -->
<div class="a" style="left:1561px;top:174px;width:350px;height:344px;overflow:hidden">
<div class="a" style="left:0;top:325px;width:350px;height:23px;background:#007acc"></div>
<div class="t" style="left:41px;top:8px;">Solution 'Demo_01' (5 of 5 projects)</div>
<div class="t" style="left:64px;top:31px;">01 - Presentation</div>
<div class="t" style="left:86px;top:54px;font-weight:bold;">Demo_01</div>
<div class="t" style="left:64px;top:77px;">02 - Application</div>
<div class="t" style="left:86px;top:100px;">Demo_01.Application</div>
<div class="t" style="left:109px;top:123px;">Properties</div>
<div class="t" style="left:109px;top:146px;">References</div>
<div class="t" style="left:109px;top:169px;">Interfaces</div>
<div class="t" style="left:109px;top:192px;">Providers</div>
<div class="t" style="left:109px;top:215px;">Class1.cs</div>
<div class="t" style="left:64px;top:238px;">03 - Domain</div>
<div class="t" style="left:86px;top:261px;">Demo_01.Domain</div>
<div class="t" style="left:109px;top:284px;">Properties</div>
<div class="t" style="left:109px;top:307px;">References</div>
<div class="t" style="left:109px;top:330px;">Models</div>
<svg style="left:0;top:0" width="350" height="344" viewBox="1561 174 350 344">
<path d="M1577.6,193 v-11 h16.6 v14.3 h-10" fill="none" stroke="#c8c8c8" stroke-width="1.3"/><rect x="1577" y="181" width="18" height="3.2" fill="#c8c8c8"/><rect x="1576.5" y="188" width="11.5" height="11.5" fill="#252526"/><path transform="translate(1577,189) scale(0.43) translate(-5.8,-4.9)" fill="#9b4fd8" fill-rule="evenodd" d="M5.8,11 L8.7,9.9 L14.4,14.2 L23.6,4.9 L30,7.8 L30,25.9 L23.6,29 L14.4,19.8 L8.7,24 L5.8,22.8 Z M9.1,14 L12,16.9 L9.1,19.9 Z M18,16.9 L23.8,12.2 L23.8,21.8 Z"/>
<path d="M1582.2,208.3 v8.2 h-8.2 z" fill="#e0e0e0"/>
<path d="M1601,218.5 v-12 h5 l1.5,-1.2 h9.5 v13.2 z" fill="#252526" stroke="#dcb67a" stroke-width="1.3" stroke-linejoin="round"/><path d="M1600,211.5 h13 l4,7.5 h-15 z" fill="#dcb67a"/>
<path d="M1597.6,229.2 L1603,235 L1597.6,240.8 z" fill="none" stroke="#e0e0e0" stroke-width="1.1"/>
<path d="M1622.6,235 v-6 h17 v14.5 h-7" fill="none" stroke="#c8c8c8" stroke-width="1.3"/><rect x="1622" y="228.4" width="18" height="3" fill="#c8c8c8"/><circle cx="1628" cy="239" r="5.8" fill="#252526"/><circle cx="1628" cy="239" r="5.1" fill="none" stroke="#6ac46a" stroke-width="1.1"/><ellipse cx="1628" cy="239" rx="2.1" ry="5.1" fill="none" stroke="#6ac46a" stroke-width="1"/><path d="M1623.2,237.2 h9.6 M1623.2,240.8 h9.6" stroke="#6ac46a" stroke-width="1"/>
<path d="M1582.2,254.3 v8.2 h-8.2 z" fill="#e0e0e0"/>
<path d="M1601,264.5 v-12 h5 l1.5,-1.2 h9.5 v13.2 z" fill="#252526" stroke="#dcb67a" stroke-width="1.3" stroke-linejoin="round"/><path d="M1600,257.5 h13 l4,7.5 h-15 z" fill="#dcb67a"/>
<path d="M1604.2,277.3 v8.2 h-8.2 z" fill="#e0e0e0"/>
<rect x="1623" y="275.4" width="16" height="13.4" fill="#252526" stroke="#6ac46a" stroke-width="2"/><text x="1625.2" y="285.8" font-size="9" font-family="Liberation Sans" font-weight="bold" fill="#c8c8c8">C#</text>
<path d="M1620.6,298.2 L1626,304 L1620.6,309.8 z" fill="none" stroke="#e0e0e0" stroke-width="1.1"/>
<circle cx="1656.9" cy="301.9" r="5.6" fill="#c8c8c8"/><path d="M1656.9,301.9 L1647.3000000000002,311.5" stroke="#c8c8c8" stroke-width="3.3" stroke-linecap="round"/><path d="M1657.8000000000002,301.0 L1663.9,294.9" stroke="#252526" stroke-width="3.4" stroke-linecap="round"/>
<path d="M1620.6,321.2 L1626,327 L1620.6,332.8 z" fill="none" stroke="#e0e0e0" stroke-width="1.1"/>
<rect x="1645" y="324" width="5" height="6" fill="#c8c8c8"/><rect x="1651.3" y="326.6" width="2.5" height="1" fill="#c8c8c8"/><rect x="1655" y="323" width="8" height="9" fill="#c8c8c8"/>
<path d="M1645,345 h6 l1,-2 h9.5 v14.5 h-16.5 z" fill="#dcb67a"/><rect x="1652.5" y="344.2" width="8" height="1" fill="#9a7a45"/>
<path d="M1645,368 h6 l1,-2 h9.5 v14.5 h-16.5 z" fill="#dcb67a"/><rect x="1652.5" y="367.2" width="8" height="1" fill="#9a7a45"/>
<path d="M1620.6,390.2 L1626,396 L1620.6,401.8 z" fill="none" stroke="#e0e0e0" stroke-width="1.1"/>
<text x="1647" y="401.5" font-size="12" font-family="Liberation Sans" font-weight="bold" fill="#7ac47a">C</text><text x="1654.5" y="398.5" font-size="9" font-family="Liberation Sans" font-weight="bold" fill="#7ac47a">#</text>
<path d="M1582.2,415.3 v8.2 h-8.2 z" fill="#e0e0e0"/>
<path d="M1601,425.5 v-12 h5 l1.5,-1.2 h9.5 v13.2 z" fill="#252526" stroke="#dcb67a" stroke-width="1.3" stroke-linejoin="round"/><path d="M1600,418.5 h13 l4,7.5 h-15 z" fill="#dcb67a"/>
<path d="M1604.2,438.3 v8.2 h-8.2 z" fill="#e0e0e0"/>
<rect x="1623" y="436.4" width="16" height="13.4" fill="#252526" stroke="#6ac46a" stroke-width="2"/><text x="1625.2" y="446.8" font-size="9" font-family="Liberation Sans" font-weight="bold" fill="#c8c8c8">C#</text>
<path d="M1620.6,459.2 L1626,465 L1620.6,470.8 z" fill="none" stroke="#e0e0e0" stroke-width="1.1"/>
<circle cx="1656.9" cy="462.9" r="5.6" fill="#c8c8c8"/><path d="M1656.9,462.9 L1647.3000000000002,472.5" stroke="#c8c8c8" stroke-width="3.3" stroke-linecap="round"/><path d="M1657.8000000000002,462.0 L1663.9,455.9" stroke="#252526" stroke-width="3.4" stroke-linecap="round"/>
<path d="M1620.6,482.2 L1626,488 L1620.6,493.8 z" fill="none" stroke="#e0e0e0" stroke-width="1.1"/>
<rect x="1645" y="485" width="5" height="6" fill="#c8c8c8"/><rect x="1651.3" y="487.6" width="2.5" height="1" fill="#c8c8c8"/><rect x="1655" y="484" width="8" height="9" fill="#c8c8c8"/>
<path d="M1645,506 h6 l1,-2 h9.5 v14.5 h-16.5 z" fill="#dcb67a"/><rect x="1652.5" y="505.2" width="8" height="1" fill="#9a7a45"/>
</svg>
</div>
<svg style="left:0;top:0" width="1919" height="1029" viewBox="0 0 1919 1029"><g fill="#5aa0dc"><rect x="1689" y="97" width="1" height="1"/><rect x="1689" y="102" width="1" height="1"/><rect x="1691" y="99" width="1" height="1"/><rect x="1694" y="97" width="1" height="1"/><rect x="1694" y="102" width="1" height="1"/><rect x="1696" y="99" width="1" height="1"/><rect x="1699" y="97" width="1" height="1"/><rect x="1699" y="102" width="1" height="1"/><rect x="1701" y="99" width="1" height="1"/><rect x="1704" y="97" width="1" height="1"/><rect x="1704" y="102" width="1" height="1"/><rect x="1706" y="99" width="1" height="1"/><rect x="1709" y="97" width="1" height="1"/><rect x="1709" y="102" width="1" height="1"/><rect x="1711" y="99" width="1" height="1"/><rect x="1714" y="97" width="1" height="1"/><rect x="1714" y="102" width="1" height="1"/><rect x="1716" y="99" width="1" height="1"/><rect x="1719" y="97" width="1" height="1"/><rect x="1719" y="102" width="1" height="1"/><rect x="1721" y="99" width="1" height="1"/><rect x="1724" y="97" width="1" height="1"/><rect x="1724" y="102" width="1" height="1"/><rect x="1726" y="99" width="1" height="1"/><rect x="1729" y="97" width="1" height="1"/><rect x="1729" y="102" width="1" height="1"/><rect x="1731" y="99" width="1" height="1"/><rect x="1734" y="97" width="1" height="1"/><rect x="1734" y="102" width="1" height="1"/><rect x="1736" y="99" width="1" height="1"/><rect x="1739" y="97" width="1" height="1"/><rect x="1739" y="102" width="1" height="1"/><rect x="1741" y="99" width="1" height="1"/><rect x="1744" y="97" width="1" height="1"/><rect x="1744" y="102" width="1" height="1"/><rect x="1746" y="99" width="1" height="1"/><rect x="1749" y="97" width="1" height="1"/><rect x="1749" y="102" width="1" height="1"/><rect x="1751" y="99" width="1" height="1"/><rect x="1754" y="97" width="1" height="1"/><rect x="1754" y="102" width="1" height="1"/><rect x="1756" y="99" width="1" height="1"/><rect x="1759" y="97" width="1" height="1"/><rect x="1759" y="102" width="1" height="1"/><rect x="1761" y="99" width="1" height="1"/><rect x="1764" y="97" width="1" height="1"/><rect x="1764" y="102" width="1" height="1"/><rect x="1766" y="99" width="1" height="1"/><rect x="1769" y="97" width="1" height="1"/><rect x="1769" y="102" width="1" height="1"/><rect x="1771" y="99" width="1" height="1"/><rect x="1774" y="97" width="1" height="1"/><rect x="1774" y="102" width="1" height="1"/><rect x="1776" y="99" width="1" height="1"/><rect x="1779" y="97" width="1" height="1"/><rect x="1779" y="102" width="1" height="1"/><rect x="1781" y="99" width="1" height="1"/><rect x="1784" y="97" width="1" height="1"/><rect x="1784" y="102" width="1" height="1"/><rect x="1786" y="99" width="1" height="1"/><rect x="1789" y="97" width="1" height="1"/><rect x="1789" y="102" width="1" height="1"/><rect x="1791" y="99" width="1" height="1"/><rect x="1794" y="97" width="1" height="1"/><rect x="1794" y="102" width="1" height="1"/><rect x="1796" y="99" width="1" height="1"/><rect x="1799" y="97" width="1" height="1"/><rect x="1799" y="102" width="1" height="1"/><rect x="1801" y="99" width="1" height="1"/><rect x="1804" y="97" width="1" height="1"/><rect x="1804" y="102" width="1" height="1"/><rect x="1806" y="99" width="1" height="1"/><rect x="1809" y="97" width="1" height="1"/><rect x="1809" y="102" width="1" height="1"/><rect x="1811" y="99" width="1" height="1"/><rect x="1814" y="97" width="1" height="1"/><rect x="1814" y="102" width="1" height="1"/><rect x="1816" y="99" width="1" height="1"/><rect x="1819" y="97" width="1" height="1"/><rect x="1819" y="102" width="1" height="1"/><rect x="1821" y="99" width="1" height="1"/><rect x="1824" y="97" width="1" height="1"/><rect x="1824" y="102" width="1" height="1"/><rect x="1826" y="99" width="1" height="1"/><rect x="1829" y="97" width="1" height="1"/><rect x="1829" y="102" width="1" height="1"/><rect x="1831" y="99" width="1" height="1"/><rect x="1834" y="97" width="1" height="1"/><rect x="1834" y="102" width="1" height="1"/><rect x="1836" y="99" width="1" height="1"/></g><path d="M1849,97 h10 l-5,5.2z" fill="#fff"/><path d="M1871.5,93.5 h6 v7.5 h-6z" fill="none" stroke="#fff" stroke-width="1.3"/><rect x="1870" y="100.6" width="9" height="1.6" fill="#fff"/><rect x="1874" y="102" width="1.2" height="5" fill="#fff"/><rect x="1873" y="93.5" width="1.6" height="7" fill="#fff"/><path d="M1890.8,95.5 L1901.3,104.2 M1901.3,95.5 L1890.8,104.2" stroke="#fff" stroke-width="1.6"/><g fill="#46464a"><rect x="108" y="97" width="1" height="1"/><rect x="108" y="102" width="1" height="1"/><rect x="110" y="99" width="1" height="1"/><rect x="113" y="97" width="1" height="1"/><rect x="113" y="102" width="1" height="1"/><rect x="115" y="99" width="1" height="1"/><rect x="118" y="97" width="1" height="1"/><rect x="118" y="102" width="1" height="1"/><rect x="120" y="99" width="1" height="1"/><rect x="123" y="97" width="1" height="1"/><rect x="123" y="102" width="1" height="1"/><rect x="125" y="99" width="1" height="1"/><rect x="128" y="97" width="1" height="1"/><rect x="128" y="102" width="1" height="1"/><rect x="130" y="99" width="1" height="1"/><rect x="133" y="97" width="1" height="1"/><rect x="133" y="102" width="1" height="1"/><rect x="135" y="99" width="1" height="1"/><rect x="138" y="97" width="1" height="1"/><rect x="138" y="102" width="1" height="1"/><rect x="140" y="99" width="1" height="1"/><rect x="143" y="97" width="1" height="1"/><rect x="143" y="102" width="1" height="1"/><rect x="145" y="99" width="1" height="1"/><rect x="148" y="97" width="1" height="1"/><rect x="148" y="102" width="1" height="1"/><rect x="150" y="99" width="1" height="1"/><rect x="153" y="97" width="1" height="1"/><rect x="153" y="102" width="1" height="1"/><rect x="155" y="99" width="1" height="1"/><rect x="158" y="97" width="1" height="1"/><rect x="158" y="102" width="1" height="1"/><rect x="160" y="99" width="1" height="1"/><rect x="163" y="97" width="1" height="1"/><rect x="163" y="102" width="1" height="1"/><rect x="165" y="99" width="1" height="1"/><rect x="168" y="97" width="1" height="1"/><rect x="168" y="102" width="1" height="1"/><rect x="170" y="99" width="1" height="1"/><rect x="173" y="97" width="1" height="1"/><rect x="173" y="102" width="1" height="1"/><rect x="175" y="99" width="1" height="1"/><rect x="178" y="97" width="1" height="1"/><rect x="178" y="102" width="1" height="1"/><rect x="180" y="99" width="1" height="1"/></g><path d="M190,97 h9.6 l-4.8,5z" fill="#f1f1f1"/><path d="M212,93.5 h6 v7.5 h-6z" fill="none" stroke="#f1f1f1" stroke-width="1.3"/><rect x="210.5" y="100.6" width="9" height="1.6" fill="#f1f1f1"/><rect x="214.5" y="102" width="1.2" height="5" fill="#f1f1f1"/><rect x="213.5" y="93.5" width="1.6" height="7" fill="#f1f1f1"/><path d="M231.5,95.5 L242.3,104.5 M242.3,95.5 L231.5,104.5" stroke="#f1f1f1" stroke-width="1.6"/><circle cx="228.5" cy="123.5" r="3.8" fill="none" stroke="#f1f1f1" stroke-width="1.9"/><path d="M225.6,126.4 L219,133" stroke="#f1f1f1" stroke-width="2.6" stroke-linecap="round"/><path d="M239.8,125.5 h7.7 l-3.85,4z" fill="#f1f1f1"/><path d="M50.5,150.5 L56.3,155.5 L50.5,160.5 z" fill="none" stroke="#f1f1f1" stroke-width="1.1"/><circle cx="1579" cy="131" r="7.2" fill="#505050"/><path d="M1583.5,131 H1575.5 M1578.6,127.6 L1575.2,131 L1578.6,134.4" fill="none" stroke="#2d2d30" stroke-width="1.7"/><circle cx="1606" cy="131" r="7.2" fill="#505050"/><path d="M1601.5,131 H1609.5 M1606.4,127.6 L1609.8,131 L1606.4,134.4" fill="none" stroke="#2d2d30" stroke-width="1.7"/><path d="M1625.5,131.5 L1633,123.5 L1640.5,131.5" fill="none" stroke="#c8c8c8" stroke-width="1.6"/><path d="M1627,130 v9.3 h12 v-9.3 L1633,124 z" fill="#2d2d30" stroke="#c8c8c8" stroke-width="1.3"/><rect x="1631" y="133" width="4" height="6" fill="#c8c8c8"/><rect x="1637.3" y="122" width="1.2" height="5" fill="#c8c8c8"/><path d="M1658,124 h4 l1,-2 h7 v9.5 h-12z" fill="#dcb67a"/><rect x="1652.5" y="128" width="11" height="9.2" fill="#2d2d30" stroke="#c8c8c8" stroke-width="1.3"/><rect x="1652" y="127.5" width="12" height="2.3" fill="#c8c8c8"/><path d="M1654,126.5 v-3 h3.5" fill="none" stroke="#75beff" stroke-width="1.3"/><path d="M1657,121.5 l2.2,2 l-2.2,2z" fill="#75beff"/><path d="M1669,132.5 v3.5 h-3" fill="none" stroke="#75beff" stroke-width="1.3"/><path d="M1666,134 l-2.2,2 l2.2,2z" fill="#75beff"/><path d="M1678,129 h7.5 l-3.75,4z" fill="#999"/><rect x="1694" y="118" width="1" height="24" fill="#3f3f46"/><path d="M1705.5,121 h6.5 l-2.5,3 v2.5 h-1.5 v-2.5z" fill="#ddd"/><circle cx="1715.6" cy="132.8" r="5.9" fill="none" stroke="#ccc" stroke-width="1.2"/><path d="M1714.8,129 v4.5 h3.5" fill="none" stroke="#ccc" stroke-width="1.2"/><path d="M1730,129 h7.6 l-3.8,4z" fill="#999"/><path d="M1759,127 h-10 M1751.5,123.8 l-3.2,3.2 l3.2,3.2 M1749,134.8 h10.5 M1756.5,131.5 l3.3,3.3 l-3.3,3.3" fill="none" stroke="#555" stroke-width="2"/><path d="M1786.5,130 A6.5,6.5 0 1 1 1780,126" fill="none" stroke="#75beff" stroke-width="2.2"/><path d="M1781,122 L1786.5,126.5 L1781,130z" fill="#75beff"/><g fill="none" stroke="#bbb" stroke-width="1.1"><path d="M1808,126.5 v-3 h7.5 v8 h-3"/><path d="M1805,129.5 v-3 h7.5 v8 h-3"/><rect x="1802.5" y="128.5" width="8" height="8"/></g><rect x="1804.5" y="131.8" width="4" height="1.4" fill="#75beff"/><g fill="none" stroke="#bbb" stroke-width="1.1"><path d="M1829,135 h-2.5 v-12 h4"/><path d="M1841,135 h2.5 v-9 l-3,-3 h-5"/><path d="M1830.5,127.5 h6.5 l3,3 v9 h-9.5z" fill="#2d2d30"/><path d="M1832.5,132 h5 M1832.5,134.5 h5 M1832.5,137 h5"/></g><rect x="1854" y="118" width="1" height="24" fill="#3f3f46"/><circle cx="1874.6" cy="127.8" r="5.6" fill="#c8c8c8"/><path d="M1874.6,127.8 L1865.0,137.4" stroke="#c8c8c8" stroke-width="3.3" stroke-linecap="round"/><path d="M1875.5,126.89999999999999 L1881.6,120.8" stroke="#2d2d30" stroke-width="3.4" stroke-linecap="round"/><path d="M1901,119.6 l2,2.2 l-2,2.2z M1906.8,119.6 l2,2.2 l-2,2.2z" fill="#999"/><circle cx="1887.5" cy="157.5" r="3.8" fill="none" stroke="#f1f1f1" stroke-width="1.9"/><path d="M1884.6,160.4 L1878,167" stroke="#f1f1f1" stroke-width="2.6" stroke-linecap="round"/><path d="M1899.2,160 h7.7 l-3.85,4z" fill="#f1f1f1"/></svg>
<!-- ============ STATUS BAR ============ -->
<div class="a" style="left:0;top:997px;width:1919px;height:30px;background:#007acc"></div>
<div class="a" style="left:0;top:1027px;width:1919px;height:2px;background:#1c2a35"></div>
<div class="a" style="left:59px;top:1027px;width:430px;height:2px;background:#f0f0f0"></div>
<div class="a" style="left:923px;top:1027px;width:55px;height:2px;background:#555a60"></div>
<div class="t" style="left:34px;top:1005px;color:#fff">This item does not support previewing</div>
<div class="t" style="left:1680px;top:1005px;color:#fff">Add to Source Control</div>
<svg style="left:0;top:0" width="1919" height="1029" viewBox="0 0 1919 1029">
 <path d="M8,1006.3 H23.5 L19.8,1019.2 H4.3 z" fill="none" stroke="#fff" stroke-width="1.3"/>
 <path d="M1662.9,1019.7 V1008.5 M1658.2,1012.5 L1662.9,1007.5 L1667.6,1012.5" fill="none" stroke="#d8d8d8" stroke-width="1.8"/>
 <path d="M1836.3,1015.4 L1841,1010.3 L1845.7,1015.4 z" fill="#fff"/>
 <path d="M1872,1017.5 C1874.5,1015 1873.5,1009 1875.5,1006.5 C1877,1004.5 1880,1004.5 1881.5,1006.5 C1883.5,1009 1882.5,1015 1885,1017.5 z" fill="#c8c8c8"/>
 <rect x="1876.5" y="1018.3" width="4" height="2.2" fill="#c8c8c8"/>
 <circle cx="1888.9" cy="1016.8" r="7.5" fill="#e51400"/>
 <text x="1885.4" y="1021.8" font-size="12" font-family="Liberation Sans" fill="#fff">3</text>
</svg>
<!-- MAIN CONTEXT MENU -->
<div class="a" style="left:1548px;top:518px;width:365px;height:476px;background:#1b1b1c;border:1px solid #333337;box-shadow:2px 2px 4px rgba(0,0,0,.35)"></div>
<div class="a" style="left:1552px;top:522px;width:357px;height:27px;background:#333334"></div>
<div class="t" style="left:1592px;top:529px;color:#f1f1f1;transform:scaleX(1.015);transform-origin:0 0;">Add</div>
<div class="msep" style="left:1587px;top:552px;width:321px"></div>
<div class="t" style="left:1592px;top:563px;color:#f1f1f1;transform:scaleX(0.968);transform-origin:0 0;">Scope to This</div>
<div class="t" style="left:1592px;top:591px;color:#f1f1f1;transform:scaleX(0.993);transform-origin:0 0;">New Solution Explorer View</div>
<div class="msep" style="left:1587px;top:612px;width:321px"></div>
<div class="t" style="left:1592px;top:624px;color:#f1f1f1;transform:scaleX(0.971);transform-origin:0 0;">View History...</div>
<div class="msep" style="left:1587px;top:647px;width:321px"></div>
<div class="t" style="left:1592px;top:657px;color:#f1f1f1;transform:scaleX(0.967);transform-origin:0 0;">Exclude From Project</div>
<div class="msep" style="left:1587px;top:681px;width:321px"></div>
<div class="t" style="left:1592px;top:691px;color:#f1f1f1;transform:scaleX(0.93);transform-origin:0 0;">Cut</div>
<div class="t" style="left:1823px;top:691px;color:#f1f1f1;transform:scaleX(0.991);transform-origin:0 0;">Ctrl+X</div>
<div class="t" style="left:1592px;top:719px;color:#f1f1f1;transform:scaleX(0.959);transform-origin:0 0;">Copy</div>
<div class="t" style="left:1823px;top:719px;color:#f1f1f1;transform:scaleX(0.972);transform-origin:0 0;">Ctrl+C</div>
<div class="t" style="left:1592px;top:746px;color:#656565;">Paste</div>
<div class="t" style="left:1823px;top:746px;color:#656565;">Ctrl+V</div>
<div class="t" style="left:1592px;top:774px;color:#f1f1f1;">Delete</div>
<div class="t" style="left:1823px;top:774px;color:#f1f1f1;">Del</div>
<div class="t" style="left:1592px;top:801px;color:#f1f1f1;">Rename</div>
<div class="t" style="left:1823px;top:801px;color:#f1f1f1;">F2</div>
<div class="msep" style="left:1587px;top:824px;width:321px"></div>
<div class="t" style="left:1592px;top:835px;color:#f1f1f1;">Copy Path</div>
<div class="msep" style="left:1587px;top:858px;width:321px"></div>
<div class="t" style="left:1592px;top:869px;color:#f1f1f1;transform:scaleX(0.997);transform-origin:0 0;">Open Command Prompt</div>
<div class="msep" style="left:1587px;top:892px;width:321px"></div>
<div class="t" style="left:1592px;top:902px;color:#f1f1f1;transform:scaleX(0.981);transform-origin:0 0;">Open Folder in File Explorer</div>
<div class="msep" style="left:1587px;top:926px;width:321px"></div>
<div class="t" style="left:1592px;top:937px;color:#f1f1f1;">Sitecore</div>
<div class="msep" style="left:1587px;top:959px;width:321px"></div>
<div class="t" style="left:1592px;top:970px;color:#f1f1f1;">Properties</div>
<div class="t" style="left:1823px;top:970px;color:#f1f1f1;">Alt+Enter</div>
<svg style="left:0;top:0" width="1919" height="1029" viewBox="0 0 1919 1029">
 <!-- add arrow -->
 <path d="M1894,531 L1899.2,535.5 L1894,540 z" fill="#007acc"/>
 <!-- new solution explorer view -->
 <g fill="none" stroke="#b4b4b4" stroke-width="1.3">
  <path d="M1563.5,592 v-3.8 h12 v12 h-3.6"/>
  <rect x="1558.5" y="593.2" width="12" height="12"/>
 </g>
 <rect x="1562.8" y="587.6" width="13.2" height="2.2" fill="#b4b4b4"/>
 <rect x="1557.9" y="592.6" width="13.2" height="2.4" fill="#b4b4b4"/>
 <g fill="#b4b4b4"><rect x="1561" y="597" width="1" height="1"/><rect x="1563" y="597" width="5" height="1"/><rect x="1561" y="599.5" width="1" height="1"/><rect x="1563" y="599.3" width="5" height="1.6"/><rect x="1561" y="602" width="2.5" height="1"/><rect x="1565" y="602" width="2.5" height="1"/><rect x="1573" y="592" width="1" height="1"/><rect x="1573" y="597" width="1" height="1"/></g>
 <!-- view history -->
 <path d="M1559.2,627 A8.2,8.2 0 1 1 1559.5,634.5" fill="none" stroke="#5fbf5f" stroke-width="1.8"/>
 <path d="M1557.6,622.3 v6.4 h6.2 z" fill="#5fbf5f"/>
 <path d="M1565.8,625.5 v5.5 l3.3,3.3" fill="none" stroke="#b4b4b4" stroke-width="1.3"/>
 <!-- cut -->
 <g fill="none" stroke="#c8c8c8" stroke-width="1.2">
  <path d="M1562,690 L1569,701.5 M1571.4,690 L1564.5,701.5"/>
  <circle cx="1562.8" cy="703.6" r="2.6"/><circle cx="1571" cy="703.6" r="2.6"/>
 </g>
 <!-- copy -->
 <g fill="none" stroke="#b4b4b4" stroke-width="1.2">
  <path d="M1565,720.5 v-3.5 h9 v12 h-4"/>
  <rect x="1559.6" y="722" width="9.4" height="12"/>
 </g>
 <!-- paste disabled -->
 <g fill="none" stroke="#4d4d4d" stroke-width="1.2">
  <path d="M1562,753 v-7.5 h10.6 v15.6 h-7"/>
  <rect x="1558.6" y="753.8" width="6.4" height="7.4"/>
  <path d="M1565,745.5 l2,-1.6 l2,1.6"/>
 </g>
 <!-- delete -->
 <path d="M1560.5,774.5 L1573,787 M1573,774.5 L1560.5,787" stroke="#f48771" stroke-width="1.9"/>
 <!-- rename -->
 <rect x="1558.8" y="802.6" width="16.4" height="11" fill="none" stroke="#c8c8c8" stroke-width="1.2"/>
 <path d="M1561.3,805 h2 M1562.3,805 v6.5 M1561.3,811.5 h2" fill="none" stroke="#9a9a9a" stroke-width=".9"/>
 <!-- cmd -->
 <rect x="1557.8" y="867.8" width="18" height="14.2" fill="#c8c8c8"/>
 <text x="1559.8" y="878.6" font-size="9" font-family="Liberation Sans" font-weight="bold" fill="#3a3a3a">C:\</text>
 <!-- open folder in explorer -->
 <path d="M1564,915.8 C1558.5,914.2 1558.5,905.5 1566,905 H1572" fill="none" stroke="#75beff" stroke-width="2.2"/>
 <path d="M1567.2,900 L1575.8,905.2 L1567.6,910.5 L1569.6,905.2 z" fill="#75beff"/>
 <!-- sitecore arrow -->
 <path d="M1894,939.5 L1899.2,944 L1894,948.5 z" fill="#999"/>
 <!-- properties wrench -->
 <circle cx="1569.6" cy="974.2" r="5.6" fill="#c8c8c8"/><path d="M1569.6,974.2 L1560.0,983.8000000000001" stroke="#c8c8c8" stroke-width="3.3" stroke-linecap="round"/><path d="M1570.5,973.3000000000001 L1576.6,967.2" stroke="#1b1b1c" stroke-width="3.4" stroke-linecap="round"/>
</svg>

<!-- SUBMENU -->
<div class="a" style="left:1142px;top:522px;width:411px;height:281px;background:#1b1b1c;border:1px solid #333337;box-shadow:2px 2px 4px rgba(0,0,0,.35)"></div>
<div class="a" style="left:1146px;top:771px;width:403px;height:27px;background:#333334"></div>
<div class="t" style="left:1185.5px;top:533px;transform:scaleX(0.954);transform-origin:0 0;">New Item...</div>
<div class="t" style="left:1443px;top:533px;transform:scaleX(1.018);transform-origin:0 0;">Ctrl+Shift+A</div>
<div class="t" style="left:1185.5px;top:560px;transform:scaleX(0.948);transform-origin:0 0;">Existing Item...</div>
<div class="t" style="left:1443px;top:560px;transform:scaleX(1.043);transform-origin:0 0;">Shift+Alt+A</div>
<div class="t" style="left:1185.5px;top:588px;transform:scaleX(0.986);transform-origin:0 0;">New Folder</div>
<div class="msep" style="left:1181px;top:611px;width:367px"></div>
<div class="t" style="left:1185.5px;top:621px;transform:scaleX(0.894);transform-origin:0 0;">REST API Client...</div>
<div class="msep" style="left:1181px;top:645px;width:367px"></div>
<div class="t" style="left:1185.5px;top:655px;transform:scaleX(0.973);transform-origin:0 0;">Machine Learning</div>
<div class="msep" style="left:1181px;top:679px;width:367px"></div>
<div class="t" style="left:1185.5px;top:689px;transform:scaleX(0.954);transform-origin:0 0;">Form (Windows Forms)...</div>
<div class="t" style="left:1185.5px;top:716px;transform:scaleX(0.959);transform-origin:0 0;">User Control (Windows Forms)...</div>
<div class="msep" style="left:1181px;top:740px;width:367px"></div>
<div class="t" style="left:1185.5px;top:750px;transform:scaleX(0.958);transform-origin:0 0;">Component...</div>
<div class="t" style="left:1185.5px;top:778px;transform:scaleX(0.824);transform-origin:0 0;">Class...</div>
<svg style="left:0;top:0" width="1919" height="1029" viewBox="0 0 1919 1029">
 <defs>
  <g id="star"><path d="M0,-4.6 V4.6 M-4.6,0 H4.6 M-3.3,-3.3 L3.3,3.3 M3.3,-3.3 L-3.3,3.3" stroke="#f2c88a" stroke-width="1.3"/><circle r="1.3" fill="#1b1b1c"/></g>
  <g id="plus"><path d="M-3.7,0 H3.7 M0,-3.7 V3.7" stroke="#6cd06c" stroke-width="2.2"/></g>
 </defs>
 <!-- new item -->
 <rect x="1158" y="536.2" width="11" height="11" fill="none" stroke="#c8c8c8" stroke-width="2.2"/>
 <rect x="1155" y="528" width="7" height="7" fill="#1b1b1c"/>
 <use href="#star" x="1156.3" y="534.8"/>
 <!-- existing item -->
 <rect x="1158" y="564" width="11" height="11" fill="none" stroke="#c8c8c8" stroke-width="2.2"/>
 <rect x="1151" y="557" width="8.5" height="8.5" fill="#1b1b1c"/>
 <use href="#plus" x="1155.7" y="561.8"/>
 <!-- new folder -->
 <path d="M1154.5,593.5 h6.5 l1.2,-1.8 h8 v12.3 h-15.7 z" fill="#dcb67a"/>
 <rect x="1162" y="592.6" width="7" height="1" fill="#8a6a35"/>
 <circle cx="1156.2" cy="589.7" r="5.2" fill="#1b1b1c"/>
 <use href="#star" x="1156.2" y="589.7"/>
 <!-- machine learning gear -->
 <g fill="#3ee0c4">
  <circle cx="1162" cy="662" r="5.6"/>
  <rect x="1160.8" y="653.8" width="2.4" height="3"/><rect x="1160.8" y="667.2" width="2.4" height="3"/>
  <rect x="1166.2" y="660.8" width="3" height="2.4"/>
  <rect x="1165.5" y="655.8" width="2.4" height="2.6" transform="rotate(45 1166.7 657.1)"/>
  <rect x="1165.5" y="665.6" width="2.4" height="2.6" transform="rotate(-45 1166.7 666.9)"/>
  <circle cx="1152.8" cy="662" r="1.2"/><circle cx="1156.5" cy="656.5" r="1.1"/><circle cx="1156.5" cy="667.5" r="1.1"/>
 </g>
 <path d="M1158.2,662 L1162,659.2 L1165.6,662 L1162,664.8 z" fill="#1b1b1c"/>
 <circle cx="1162.6" cy="662" r="1.2" fill="#3ee0c4"/>
 <!-- form -->
 <rect x="1156.2" y="690" width="12.6" height="12.6" fill="#1b1b1c" stroke="#b4b4b4" stroke-width="1.3"/>
 <rect x="1156" y="689.3" width="13.5" height="2.6" fill="#b4b4b4"/>
 <g fill="#b4b4b4"><rect x="1158.5" y="695" width="1" height="1"/><rect x="1161" y="694" width="6" height="2.6" fill="none" stroke="#b4b4b4" stroke-width=".8"/><rect x="1158.5" y="699.2" width="1" height="1"/><rect x="1161" y="699" width="6" height="1.3"/></g>
 <rect x="1151" y="686" width="8.5" height="8.5" fill="#1b1b1c"/>
 <use href="#plus" x="1155.6" y="690.4"/>
 <!-- user control -->
 <rect x="1156.1" y="715.3" width="12.8" height="15.8" fill="none" stroke="#c8c8c8" stroke-width="1.8"/>
 <rect x="1151" y="713.5" width="8.6" height="8.5" fill="#1b1b1c"/>
 <use href="#plus" x="1155.6" y="718.3"/>
 <!-- component -->
 <path d="M1158.5,749.4 h7 l3.4,3.4 v10 h-10.4" fill="none" stroke="#c8c8c8" stroke-width="1.2"/>
 <path d="M1165.5,749.4 v3.4 h3.4" fill="#c8c8c8"/>
 <rect x="1154.6" y="759.6" width="5.8" height="5.6" fill="#1b1b1c" stroke="#c8c8c8" stroke-width="1"/>
 <path d="M1157.5,759.6 v5.6 M1154.6,762.3 h5.8" stroke="#c8c8c8" stroke-width=".8"/>
 <rect x="1151" y="747" width="8.6" height="8.5" fill="#1b1b1c"/>
 <use href="#plus" x="1155.6" y="751.7"/>
 <!-- class -->
 <g fill="#c8c8c8">
  <rect x="1158" y="782.4" width="3.2" height="3.2" transform="rotate(45 1159.6 784)"/>
  <rect x="1165.1" y="782.8" width="3.2" height="3.2" transform="rotate(45 1166.7 784.4)"/>
  <rect x="1166.4" y="787.8" width="3.2" height="3.2" transform="rotate(45 1168 789.4)"/>
 </g>
 <path d="M1159.6,784 L1161.4,780.6 L1163,784 H1166.7 M1163,784 V788.8 L1168,789.4" fill="none" stroke="#c8c8c8" stroke-width="1.5"/>
 <rect x="1151" y="774.5" width="8.6" height="8.5" fill="#333334"/>
 <use href="#plus" x="1155.7" y="779.3"/>
</svg>

</body></html>
